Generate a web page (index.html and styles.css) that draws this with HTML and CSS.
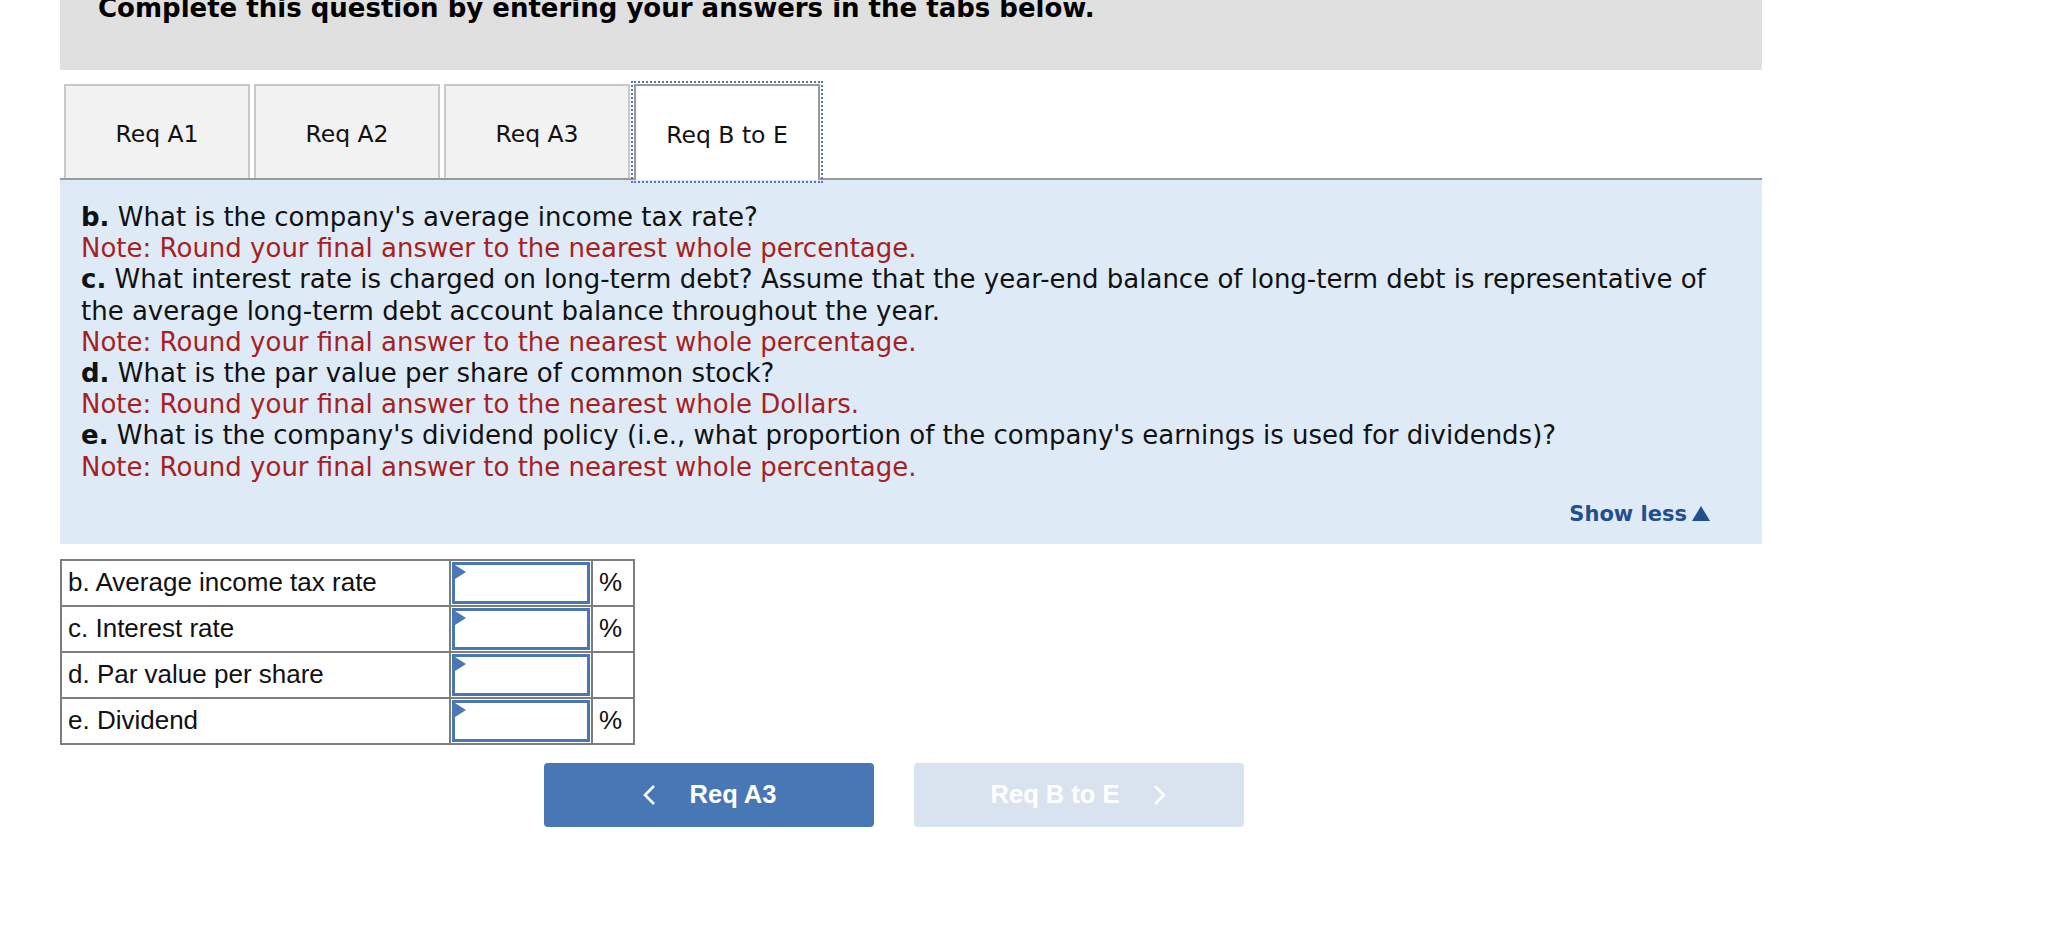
FILE: index.html
```html
<!DOCTYPE html>
<html lang="en">
<head>
<meta charset="utf-8">
<title>Req B to E</title>
<link rel="stylesheet" href="styles.css">
</head>
<body>
<div class="page">
  <div class="banner">
    <p class="banner-text">Complete this question by entering your answers in the tabs below.</p>
  </div>

  <div class="tabs">
    <button class="tab">Req A1</button>
    <button class="tab">Req A2</button>
    <button class="tab">Req A3</button>
    <button class="tab active">Req B to E</button>
  </div>

  <div class="panel">
    <p class="q"><b>b.</b> What is the company's average income tax rate?</p>
    <p class="note">Note: Round your final answer to the nearest whole percentage.</p>
    <p class="q"><b>c.</b> What interest rate is charged on long-term debt? Assume that the year-end balance of long-term debt is representative of the average long-term debt account balance throughout the year.</p>
    <p class="note">Note: Round your final answer to the nearest whole percentage.</p>
    <p class="q"><b>d.</b> What is the par value per share of common stock?</p>
    <p class="note">Note: Round your final answer to the nearest whole Dollars.</p>
    <p class="q"><b>e.</b> What is the company's dividend policy (i.e., what proportion of the company's earnings is used for dividends)?</p>
    <p class="note">Note: Round your final answer to the nearest whole percentage.</p>
    <div class="showless">
      <span class="showless-link">Show less<svg class="tri" width="18" height="15" viewBox="0 0 18 15"><polygon points="9,0 18,15 0,15" fill="#214f8c"/></svg></span>
    </div>
  </div>

  <table class="answers">
    <tr>
      <td class="label">b. Average income tax rate</td>
      <td class="field"><div class="input-wrap"><input class="input" type="text"><span class="flag"></span></div></td>
      <td class="unit">%</td>
    </tr>
    <tr>
      <td class="label">c. Interest rate</td>
      <td class="field"><div class="input-wrap"><input class="input" type="text"><span class="flag"></span></div></td>
      <td class="unit">%</td>
    </tr>
    <tr>
      <td class="label">d. Par value per share</td>
      <td class="field"><div class="input-wrap"><input class="input" type="text"><span class="flag"></span></div></td>
      <td class="unit"></td>
    </tr>
    <tr>
      <td class="label">e. Dividend</td>
      <td class="field"><div class="input-wrap"><input class="input" type="text"><span class="flag"></span></div></td>
      <td class="unit">%</td>
    </tr>
  </table>

  <div class="nav">
    <button class="nav-btn prev">
      <svg class="chev" width="14" height="22" viewBox="0 0 14 22"><polyline points="12,2 3,11 12,20" fill="none" stroke="#fff" stroke-width="2.6"/></svg>
      <span>Req A3</span>
    </button>
    <button class="nav-btn next">
      <span>Req B to E</span>
      <svg class="chev" width="14" height="22" viewBox="0 0 14 22"><polyline points="2,2 11,11 2,20" fill="none" stroke="#fff" stroke-width="2.6"/></svg>
    </button>
  </div>
</div>
</body>
</html>
```

FILE: styles.css
```css
html, body {
  margin: 0;
  padding: 0;
  background: #ffffff;
}

.page {
  margin-left: 60px;
  width: 1702px;
  font-family: "DejaVu Sans", Verdana, sans-serif;
  color: #111111;
}

.banner {
  margin-top: -10px;
  height: 80px;
  background: #e0e0e0;
  box-sizing: border-box;
  padding: 3px 0 0 38px;
}

.banner-text {
  margin: 0;
  font-weight: bold;
  font-size: 26px;
  line-height: 31px;
  color: #000000;
}

.tabs {
  margin-top: 14px;
  padding-left: 4px;
  display: flex;
  align-items: flex-end;
  gap: 4px;
  border-bottom: 2px solid #9a9a9a;
  height: 94px;
}

.tab {
  width: 186px;
  height: 94px;
  box-sizing: border-box;
  border: 2px solid #c8c8c8;
  border-bottom: none;
  background: #f2f2f2;
  font-family: "DejaVu Sans", Verdana, sans-serif;
  font-size: 23.5px;
  color: #111111;
  padding: 4px 0 0 0;
  margin: 0;
  cursor: pointer;
}

.tab.active {
  background: #ffffff;
  border-color: #9a9a9a;
  height: 96px;
  margin-bottom: -2px;
  outline: 2px dotted #4a7ab8;
  outline-offset: 1px;
}

.panel {
  background: #deebf7;
  padding: 22px 28px 17px 21px;
}

.q, .note {
  margin: 0;
  font-size: 26px;
  line-height: 31.2px;
}

.q {
  color: #111111;
}

.note {
  color: #a71f22;
}

.showless {
  margin-top: 19px;
  padding-right: 24px;
  text-align: right;
  font-weight: bold;
  font-size: 21px;
  line-height: 25px;
  color: #214f8c;
}

.showless-link {
  display: inline-flex;
  align-items: baseline;
  gap: 5px;
}

.tri {
  display: inline-block;
  vertical-align: baseline;
}

.answers {
  margin-top: 15px;
  border-collapse: collapse;
  font-family: "Liberation Sans", Arial, sans-serif;
  font-size: 26px;
  color: #111111;
}

.answers td {
  border: 2px solid #7d7d7d;
  height: 44px;
  padding: 0;
  box-sizing: border-box;
}

.label {
  width: 389px;
  padding: 0 0 0 6px !important;
}

.field {
  width: 142px;
  padding: 1px !important;
}

.unit {
  width: 42px;
  padding: 0 0 0 6px !important;
}

.input-wrap {
  position: relative;
  height: 42px;
}

.input {
  display: block;
  width: 100%;
  height: 42px;
  box-sizing: border-box;
  border: 3px solid #4a78b5;
  background: #ffffff;
  margin: 0;
  padding: 0 6px;
  font-size: 24px;
  outline: none;
}

.flag {
  position: absolute;
  left: 3px;
  top: 3px;
  width: 0;
  height: 0;
  border-top: 7px solid transparent;
  border-bottom: 7px solid transparent;
  border-left: 11px solid #4a78b5;
}

.nav {
  margin-top: 18px;
  margin-left: 484px;
  display: flex;
  gap: 40px;
}

.nav-btn {
  width: 330px;
  height: 64px;
  border: none;
  border-radius: 4px;
  display: flex;
  align-items: center;
  justify-content: center;
  gap: 34px;
  font-family: "Liberation Sans", Arial, sans-serif;
  font-weight: bold;
  font-size: 25.5px;
  color: #ffffff;
  margin: 0;
  padding: 0;
}

.prev {
  background: #4877b5;
}

.next {
  background: #d9e3ef;
}

.chev {
  display: block;
}
```
